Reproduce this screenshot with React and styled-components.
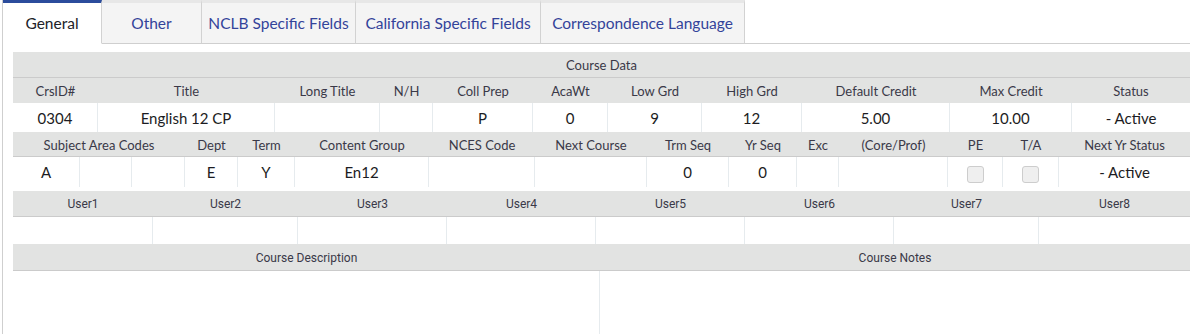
import React from "react";
import styled, { createGlobalStyle } from "styled-components";

const GlobalStyle = createGlobalStyle`
  html, body { margin: 0; padding: 0; background: #ffffff; }
  body { overflow: hidden; font-family: Lato, "Noto Sans", sans-serif; }
`;

const Page = styled.div`
  margin-left: 2px;
  width: 1188px;
  height: 334px;
  border-left: 1px solid #cfcfcf;
  overflow: hidden;
  box-sizing: border-box;
`;

const TabBar = styled.div`
  display: flex;
  height: 44px;
`;

const Tab = styled.div`
  box-sizing: border-box;
  width: ${(p) => p.$w}px;
  height: 44px;
  display: flex;
  align-items: center;
  justify-content: center;
  font-size: 15.5px;
  padding-bottom: 1px;
  color: ${(p) => (p.$active ? "#222228" : "#33439a")};
  background: ${(p) => (p.$active ? "#ffffff" : "#f4f4f4")};
  border-top: 3px solid ${(p) => (p.$active ? "#2b4c9c" : "#e7e7e7")};
  border-right: 1px solid #d2d2d2;
  border-bottom: 1px solid ${(p) => (p.$active ? "#ffffff" : "#cfcfcf")};
  white-space: nowrap;
`;

const TabFill = styled.div`
  flex: 1;
  border-bottom: 1px solid #cfcfcf;
`;

const Panel = styled.div`
  padding: 8px 0 0 10px;
`;

const Table = styled.div`
  width: 1177px;
  display: flex;
  flex-direction: column;
`;

const Row = styled.div`
  box-sizing: border-box;
  display: grid;
  grid-template-columns: ${(p) => p.$cols};
  height: ${(p) => p.$h}px;
  padding-top: ${(p) => p.$pt || 0}px;
  padding-bottom: ${(p) => p.$pb || 0}px;
  background: ${(p) => (p.$head ? "#e2e3e2" : "#ffffff")};
  border-bottom: ${(p) => (p.$line ? "1px solid #cbcbcb" : "none")};
`;

const Head = styled.div`
  grid-column: span ${(p) => p.$span || 1};
  display: flex;
  align-items: center;
  justify-content: center;
  font-family: ${(p) => (p.$narrow ? 'Roboto, "Liberation Sans", sans-serif' : 'Lato, "Noto Sans", sans-serif')};
  font-size: ${(p) => (p.$narrow ? "12px" : "13px")};
  color: #3a3948;
  white-space: nowrap;
`;

const Cell = styled.div`
  display: flex;
  align-items: center;
  justify-content: center;
  font-size: 15px;
  color: #1c1c22;
  border-right: ${(p) => (p.$last ? "none" : "1px solid #e6ebee")};
  white-space: nowrap;
`;

const Check = styled.span`
  display: inline-block;
  width: 15px;
  height: 15px;
  margin-top: 4px;
  border: 1px solid #cdcdcd;
  border-radius: 3px;
  background: #efefef;
`;

const Body = styled.div`
  display: grid;
  grid-template-columns: 587px 1fr;
  height: 70px;
`;

const BodyCell = styled.div`
  border-right: ${(p) => (p.$last ? "none" : "1px solid #e6ebee")};
`;

const cols1 = "85px 177px 105px 53px 100px 75px 94px 100px 148px 122px 1fr";
const cols2 = "67px 52px 53px 53px 57px 134px 106px 112px 82px 68px 42px 109px 55px 56px 1fr";
const cols3 = "140px 145px 149px 149px 149px 149px 145px 1fr";
const cols4 = "587px 1fr";

const tabs = [
  { label: "General", w: 99, active: true },
  { label: "Other", w: 100 },
  { label: "NCLB Specific Fields", w: 154 },
  { label: "California Specific Fields", w: 185 },
  { label: "Correspondence Language", w: 204 },
];

const head1 = ["CrsID#", "Title", "Long Title", "N/H", "Coll Prep", "AcaWt", "Low Grd", "High Grd", "Default Credit", "Max Credit", "Status"];
const data1 = ["0304", "English 12 CP", "", "", "P", "0", "9", "12", "5.00", "10.00", "- Active"];

const head2 = [
  ["Subject Area Codes", 3],
  ["Dept", 1],
  ["Term", 1],
  ["Content Group", 1],
  ["NCES Code", 1],
  ["Next Course", 1],
  ["Trm Seq", 1],
  ["Yr Seq", 1],
  ["Exc", 1],
  ["(Core/Prof)", 1],
  ["PE", 1],
  ["T/A", 1],
  ["Next Yr Status", 1],
];
const data2 = ["A", "", "", "E", "Y", "En12", "", "", "0", "0", "", "", "#check", "#check", "- Active"];

const users = ["User1", "User2", "User3", "User4", "User5", "User6", "User7", "User8"];

export default function App() {
  return (
    <>
      <GlobalStyle />
      <Page>
        <TabBar>
          {tabs.map((t) => (
            <Tab key={t.label} $w={t.w} $active={t.active}>
              {t.label}
            </Tab>
          ))}
          <TabFill />
        </TabBar>
        <Panel>
          <Table>
            <Row $cols="1fr" $h={26} $head $line>
              <Head>Course Data</Head>
            </Row>
            <Row $cols={cols1} $h={25} $head>
              {head1.map((h) => (
                <Head key={h}>{h}</Head>
              ))}
            </Row>
            <Row $cols={cols1} $h={29}>
              {data1.map((d, i) => (
                <Cell key={i} $last={i === data1.length - 1}>{d}</Cell>
              ))}
            </Row>
            <Row $cols={cols2} $h={25} $pt={2} $head $line>
              {head2.map(([h, s]) => (
                <Head key={h} $span={s}>{h}</Head>
              ))}
            </Row>
            <Row $cols={cols2} $h={34} $pb={4}>
              {data2.map((d, i) => (
                <Cell key={i} $last={i === data2.length - 1}>
                  {d === "#check" ? <Check /> : d}
                </Cell>
              ))}
            </Row>
            <Row $cols={cols3} $h={26} $head $line>
              {users.map((u) => (
                <Head key={u} $narrow>{u}</Head>
              ))}
            </Row>
            <Row $cols={cols3} $h={27}>
              {users.map((u, i) => (
                <Cell key={u} $last={i === users.length - 1} />
              ))}
            </Row>
            <Row $cols={cols4} $h={27} $pt={2} $head $line>
              <Head $narrow>Course Description</Head>
              <Head $narrow>Course Notes</Head>
            </Row>
            <Body>
              <BodyCell />
              <BodyCell $last />
            </Body>
          </Table>
        </Panel>
      </Page>
    </>
  );
}
